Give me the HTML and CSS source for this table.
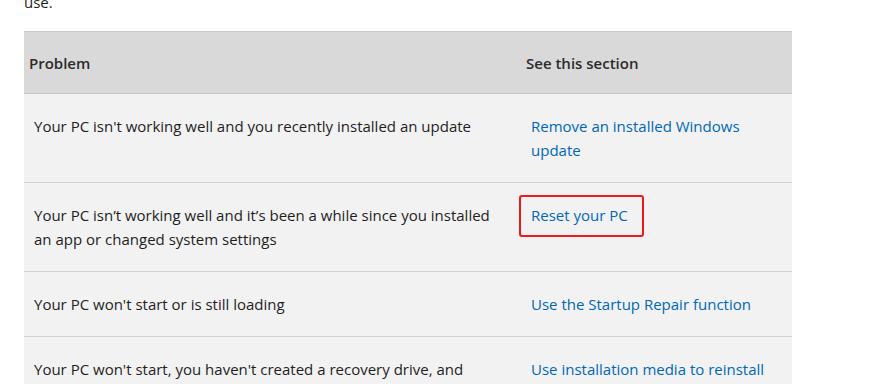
FILE: index.html
```html
<!DOCTYPE html>
<html lang="en">
<head>
    <meta charset="UTF-8">
    <title>Recovery options</title>
    <link rel="stylesheet" href="styles.css">
</head>
<body>

    <p class="intro">use.</p>

    <!-- Problem / section table -->
    <table class="options">
        <thead>
            <tr>
                <th class="col-problem">Problem</th>
                <th>See this section</th>
            </tr>
        </thead>
        <tbody>
            <tr>
                <td>Your PC isn't working well and you recently installed an update</td>
                <td><a href="#">Remove an installed Windows update</a></td>
            </tr>
            <tr>
                <td>Your PC isn’t working well and it’s been a while since you installed an app or changed system settings</td>
                <td><a href="#" class="marked">Reset your PC</a></td>
            </tr>
            <tr>
                <td>Your PC won't start or is still loading</td>
                <td><a href="#">Use the Startup Repair function</a></td>
            </tr>
            <tr>
                <td>Your PC won't start, you haven't created a recovery drive, and resetting your PC didn't work</td>
                <td><a href="#">Use installation media to reinstall Windows</a></td>
            </tr>
        </tbody>
    </table>

</body>
</html>
```

FILE: styles.css
```css
body {
    font-family: 'Open Sans', 'Noto Sans', sans-serif;
    font-size: 15px;
    line-height: 24px;
    color: #1e1e1e;
    background: #fff;
    margin: 0;
    padding: 0 24px;
}

.intro {
    margin: -10px 0 17px;
}

.options {
    border-collapse: collapse;
    width: 768px;
    table-layout: fixed;
}

.options th {
    background: #d9d9d9;
    color: #2b2b2b;
    font-weight: 600;
    text-align: left;
    padding: 19px 5px 18px;
    border-top: 1px solid #c8c8c8;
    border-bottom: 1px solid #c8c8c8;
}

.col-problem {
    width: 487px;
}

.options td {
    background: #f2f2f2;
    padding: 20px 10px;
    vertical-align: top;
    border-bottom: 1px solid #d2d2d2;
}

.options a {
    color: #0067b8;
    text-decoration: none;
}

/* red annotation box */
.marked {
    position: relative;
}

.marked::after {
    content: '';
    position: absolute;
    top: -10px;
    left: -12px;
    right: -16px;
    bottom: -12px;
    border: 2px solid #f01818;
    border-radius: 3px;
}
```
